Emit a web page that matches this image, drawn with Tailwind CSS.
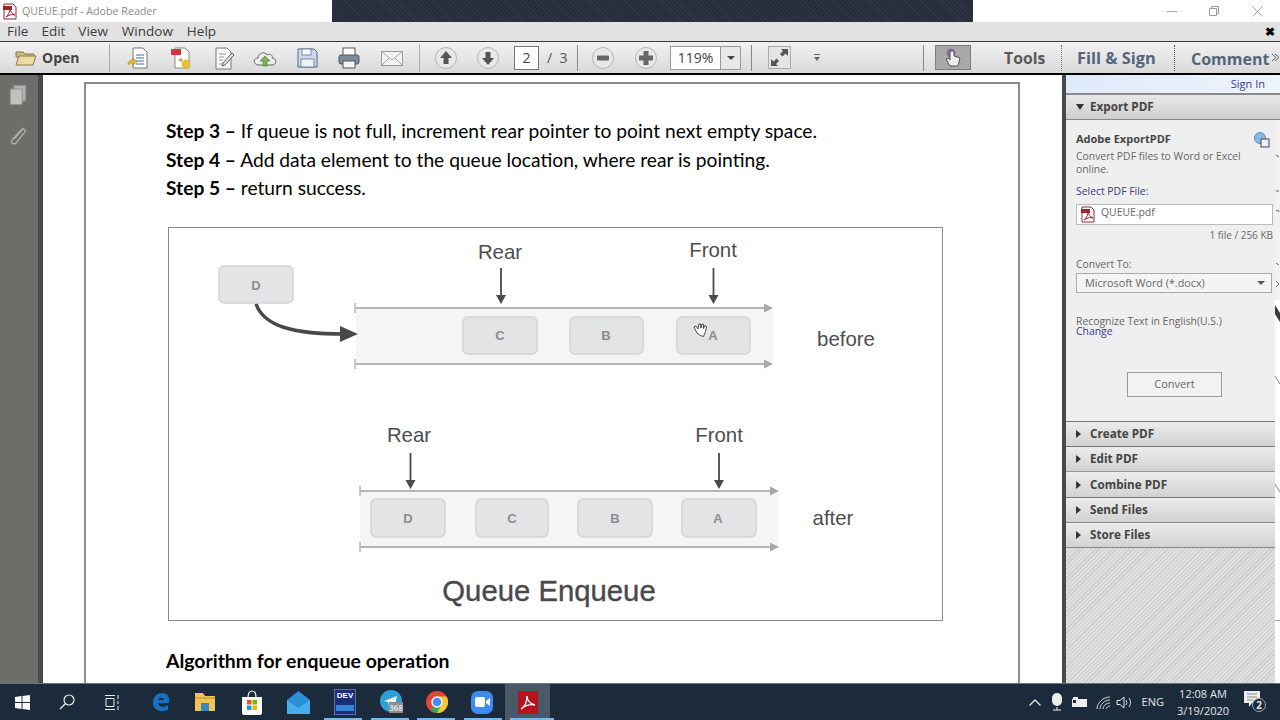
<!DOCTYPE html>
<html>
<head>
<meta charset="UTF-8">
<title>QUEUE.pdf - Adobe Reader</title>
<script src="https://cdn.jsdelivr.net/npm/@tailwindcss/browser@4"></script>
</head>
<body class="w-[1280px] h-[720px] overflow-hidden bg-white font-['Open_Sans',sans-serif] text-[#333]">
<div class="relative flex flex-col h-[720px]">

  <!-- dark banner over the title bar -->
  <div class="absolute left-[332px] top-0 w-[641px] h-[26px] bg-[repeating-linear-gradient(45deg,#262c3a_0,#262c3a_2px,#2f3645_2px,#2f3645_3px)]"></div>

  <!-- title bar -->
  <div class="h-[22px] flex items-center bg-white shrink-0">
    <svg class="ml-[2px] w-[16px] h-[17px]" viewBox="0 0 16 17"><path d="M2 1h9l3 3v12H2z" fill="#fff" stroke="#8a2b33"/><rect x="1" y="3" width="9" height="4" fill="#a3202c"/><path d="M4 14c3-2 4-6 4-9 0 3 2 6 5 7-3-1-6 0-9 2z" fill="none" stroke="#a3202c"/></svg>
    <span class="ml-[4px] text-[10.700px] text-[#8b8b8b]">QUEUE.pdf - Adobe Reader</span>
    <div class="ml-auto flex items-center text-[#a0a0a0]">
      <div class="w-[10px] h-px bg-[#aaa] mr-[32px]"></div>
      <svg class="w-[10px] h-[10px] mr-[33px]" viewBox="0 0 10 10" fill="none" stroke="#999"><path d="M.5 2.5h7v7h-7zM2.5 2.5v-2h7v7h-2"/></svg>
      <svg class="w-[11px] h-[11px] mr-[17px]" viewBox="0 0 11 11" stroke="#aaa"><path d="M.5.5l10 10M10.500.5l-10 10"/></svg>
    </div>
  </div>

  <!-- menu bar -->
  <div class="h-[19px] flex items-center bg-[#e2e2e2] shrink-0 text-[13.500px] text-[#3c3c3c] pl-[7px] relative">
    <span class="mr-[13px]">File</span><span class="mr-[13px]">Edit</span><span class="mr-[14px]">View</span><span class="mr-[14px]">Window</span><span>Help</span>
    <span class="ml-auto mr-[5px] text-[12px] font-bold text-black">✖</span>
  </div>

  <!-- toolbar -->
  <div class="h-[34px] flex items-center shrink-0 border-y border-[#3a3a3a] border-b-2 border-b-black bg-linear-to-b from-[#f2f2f2] to-[#d9d9d9]">
    <svg class="ml-[15px] w-[22px] h-[18px]" viewBox="0 0 22 18"><path d="M1 3h7l2 2h9v3H1z" fill="#c9b77f" stroke="#8c7a45"/><path d="M1 16l3-9h17l-3 9z" fill="#ecdca3" stroke="#8c7a45"/></svg>
    <span class="ml-[5px] w-[67px] text-[14px] font-bold text-[#444]">Open</span>
    <div class="w-px h-[28px] bg-[#aaa]"></div>
    <!-- file icons -->
    <svg class="ml-[16px] w-[24px] h-[24px]" viewBox="0 0 24 24"><path d="M7 2h10l4 4v16H7z" fill="#fff" stroke="#777"/><path d="M10 9h8M10 12h8M10 15h8M10 18h8" stroke="#3a6fb5" stroke-width="1.200"/><path d="M2 17c1-3 4-3 6-3l-1-2 4 4-4 3 1-2c-2 0-4 0-6 2z" fill="#e6b93a" stroke="#9a7a1c" stroke-width=".5"/></svg>
    <svg class="ml-[19px] w-[24px] h-[24px]" viewBox="0 0 24 24"><path d="M6 2h10l4 4v16H6z" fill="#fff" stroke="#888"/><rect x="2" y="3" width="10" height="6" fill="#d4343f"/><circle cx="17" cy="18" r="4.500" fill="#e6bf3c"/><path d="M9 14l4-2v4z" fill="#b89b3a"/></svg>
    <svg class="ml-[19px] w-[24px] h-[24px]" viewBox="0 0 24 24"><path d="M4 2h11l4 4v17H4z" fill="#f6f6f6" stroke="#777"/><path d="M7 8h7M7 11h5M7 14h4M7 18h5" stroke="#999"/><path d="M11 17l9-10 2 2-9 10-3 1z" fill="#ddd" stroke="#666"/></svg>
    <svg class="ml-[17px] w-[24px] h-[24px]" viewBox="0 0 24 24"><path d="M6 19c-6 0-6-7-1-7 0-5 7-7 9-3 4-2 6 1 5 3 5 0 5 7 0 7z" fill="#eee" stroke="#666"/><path d="M12 10l5 5h-3v5h-4v-5H7z" fill="#7fb35a" stroke="#4f7f33" stroke-width=".7"/></svg>
    <svg class="ml-[18px] w-[24px] h-[24px]" viewBox="0 0 24 24"><path d="M3 3h16l3 3v15H3z" fill="#cbdcf0" stroke="#56677d"/><rect x="7" y="3" width="9" height="6" fill="#f4f7fb" stroke="#56677d" stroke-width=".7"/><rect x="6" y="13" width="13" height="8" fill="#eef2f8" stroke="#56677d" stroke-width=".7"/></svg>
    <svg class="ml-[18px] w-[24px] h-[24px]" viewBox="0 0 24 24"><rect x="6" y="2" width="12" height="8" fill="#fff" stroke="#555"/><rect x="2" y="9" width="20" height="9" rx="2" fill="#7d8a9a" stroke="#4e5966"/><rect x="6" y="15" width="12" height="7" fill="#f3f3f3" stroke="#555"/></svg>
    <svg class="ml-[19px] w-[24px] h-[24px]" viewBox="0 0 24 24"><rect x="1.500" y="5.500" width="21" height="14" fill="#f3f3f3" stroke="#999"/><path d="M2 6l10 8 10-8M2 19l7-7M22 19l-7-7" fill="none" stroke="#aaa"/></svg>
    <div class="ml-[15px] w-px h-[28px] bg-[#aaa]"></div>
    <!-- page nav -->
    <svg class="ml-[15px] w-[22px] h-[22px]" viewBox="0 0 22 22"><circle cx="11" cy="11" r="10.500" fill="#e8e8e8" stroke="#b5b5b5"/><path d="M11 4l6 7h-3.500v6h-5v-6H5z" fill="#555"/></svg>
    <svg class="ml-[20px] w-[22px] h-[22px]" viewBox="0 0 22 22"><circle cx="11" cy="11" r="10.500" fill="#e8e8e8" stroke="#b5b5b5"/><path d="M11 18l6-7h-3.500V5h-5v6H5z" fill="#555"/></svg>
    <div class="ml-[15px] w-[25px] h-[24px] bg-white border border-[#777] flex items-center justify-center text-[14px] text-[#444]">2</div>
    <span class="ml-[8px] w-[30px] text-[14px] text-[#555] whitespace-nowrap">/&nbsp;&nbsp;3</span>
    <div class="w-px h-[26px] bg-[#888]"></div>
    <svg class="ml-[14px] w-[22px] h-[22px]" viewBox="0 0 22 22"><circle cx="11" cy="11" r="10.500" fill="#e8e8e8" stroke="#b5b5b5"/><rect x="5" y="8.500" width="12" height="5" rx="1" fill="#666"/></svg>
    <svg class="ml-[21px] w-[22px] h-[22px]" viewBox="0 0 22 22"><circle cx="11" cy="11" r="10.500" fill="#e8e8e8" stroke="#b5b5b5"/><path d="M8.500 4h5v4.500H18v5h-4.500V18h-5v-4.500H4v-5h4.500z" fill="#666"/></svg>
    <div class="ml-[13px] w-[71px] h-[24px] flex border border-[#999] bg-white">
      <div class="w-[50px] flex items-center justify-center text-[14px] text-[#444] border-r border-[#999]">119%</div>
      <div class="flex-1 flex items-center justify-center bg-[#e8e8e8]"><div class="border-x-[4px] border-x-transparent border-t-[4px] border-t-[#444]"></div></div>
    </div>
    <div class="ml-[10px] w-px h-[26px] bg-[#888]"></div>
    <div class="ml-[16px] w-[23px] h-[23px] border border-[#aaa] bg-[#e4e4e4] flex items-center justify-center">
      <svg class="w-[19px] h-[19px]" viewBox="0 0 19 19" fill="#555"><path d="M11 1h7v7l-2.500-2.500-3 3-2.500-2.500 3-3zM8 18H1v-7l2.500 2.500 3-3 2.500 2.500-3 3z"/></svg>
    </div>
    <div class="ml-[23px] flex flex-col items-center gap-[2px]"><div class="w-[6px] h-px bg-[#666]"></div><div class="border-x-[3px] border-x-transparent border-t-[4px] border-t-[#666]"></div></div>
    <div class="ml-[103px] w-px h-[26px] bg-[#888]"></div>
    <!-- hand tool -->
    <div class="ml-[11px] w-[36px] h-[25px] bg-[#a8a8a8] border border-[#7d7d7d] flex items-center justify-center">
      <svg class="w-[18px] h-[20px]" viewBox="0 0 18 20"><circle cx="7" cy="5" r="4.500" fill="#8572a8"/><path d="M6 3v9l-2-2-2 1 4 7h8l2-8-6-2V3z" fill="#eee" stroke="#555"/></svg>
    </div>
    <span class="ml-[33px] w-[41px] relative top-[1px] text-[15.800px] font-bold text-[#5a5a5a]">Tools</span>
    <div class="ml-[16px] h-[26px] border-l border-dotted border-[#777]"></div>
    <span class="ml-[15px] w-[82px] relative top-[1px] text-[16.400px] font-bold text-[#56657d] whitespace-nowrap">Fill &amp; Sign</span>
    <div class="ml-[15px] h-[26px] border-l border-dotted border-[#555]"></div>
    <span class="ml-[16px] w-[77px] relative top-[1px] text-[16px] font-bold text-[#56657d] whitespace-nowrap">Comment</span>
    <svg class="ml-[4px] w-[7px] h-[9px]" viewBox="0 0 7 9" fill="none" stroke="#666"><path d="M0 1l4 3.500L0 8M3 1l4 3.500L3 8"/></svg>
  </div>

  <!-- main -->
  <div class="flex-1 flex min-h-0">
    <!-- left rail -->
    <div class="w-[43px] shrink-0 flex">
      <div class="w-[38px] bg-[#6f6d6a] flex flex-col items-center pt-[9px] gap-[19px]">
        <svg class="w-[20px] h-[22px] ml-[-2px]" viewBox="0 0 20 24"><rect x="5.500" y="1.500" width="13" height="17" fill="#b3b1af" stroke="#918f8d"/><rect x="1.500" y="5.500" width="13" height="17" fill="#c2c0be" stroke="#918f8d"/></svg>
        <svg class="w-[20px] h-[22px] ml-[-2px]" viewBox="0 0 20 22" fill="none" stroke="#b0aeac" stroke-width="1.300"><path d="M15 3L4 15c-2 3 2 5 4 3l9-11c1-2-1-4-3-2L6 14"/></svg>
      </div>
      <div class="w-[5px] bg-[#4b4a48]"></div>
    </div>

    <!-- document area -->
    <div class="flex-1 bg-white pl-[42px] pt-[7px] overflow-hidden">
      <div class="ml-[-1px] w-[936px] h-[620px] border-x-2 border-t-2 border-x-[#8e8e8e] border-t-[#8e8e8e] font-['Lato',sans-serif] text-black">
        <div class="pl-[80px] pt-[33px] text-[19.200px] leading-[28.500px] h-[143px]">
          <p><b>Step 3 –</b> If queue is not full, increment rear pointer to point next empty space.</p>
          <p><b>Step 4 –</b> Add data element to the queue location, where rear is pointing.</p>
          <p><b>Step 5 –</b> return success.</p>
        </div>
        <!-- diagram -->
        <div class="ml-[82px] w-[775px] h-[394px] border border-[#8a8a8a]">
          <svg width="773" height="392" viewBox="169 228 773 392" font-family="Liberation Sans, sans-serif" fill="#4e4e50">
            <rect x="356" y="309" width="417" height="55" fill="#f5f5f5"/>
            <rect x="360" y="492" width="418" height="55" fill="#f5f5f5"/>
            <g fill="#e3e4e6" stroke="#d3d4d5" stroke-width="1.500">
              <rect x="219" y="266" width="74" height="37" rx="5"/>
              <rect x="463" y="317" width="74" height="37" rx="5"/>
              <rect x="570" y="317" width="73" height="37" rx="5"/>
              <rect x="677" y="317" width="73" height="37" rx="5"/>
              <rect x="371" y="499" width="74" height="38" rx="5"/>
              <rect x="476" y="499" width="72" height="38" rx="5"/>
              <rect x="578" y="499" width="74" height="38" rx="5"/>
              <rect x="682" y="499" width="74" height="38" rx="5"/>
            </g>
            <g stroke="#b5b5b5" stroke-width="2" fill="#a8a8a8">
              <path d="M356 308H764M356 364H764M360 491H770M360 547H770"/>
              <path d="M764 303.500l9 4.500-9 4.500zM764 359.500l9 4.500-9 4.500zM770 486.500l9 4.500-9 4.500zM770 542.500l9 4.500-9 4.500z" stroke="none"/>
              <path d="M355 303v10M355 359v10M360 486v10M360 542v10" stroke-width="1.500"/>
            </g>
            <g stroke="#4a4a4c" stroke-width="1.800" fill="#4a4a4c">
              <path d="M501 268V297M713.500 268V297M410.500 453V481M719 453V481"/>
              <path d="M496 295h10l-5 9zM708.500 295h10l-5 9zM405.500 480h10l-5 9zM714 480h10l-5 9z" stroke="none"/>
            </g>
            <path d="M256 304c8 22 36 30 88 30" fill="none" stroke="#48484b" stroke-width="3.500"/>
            <path d="M340 326l18 8-18 8z" fill="#48484b"/>
            <g font-size="13" font-weight="700" text-anchor="middle" fill="#8c8d91">
              <text x="256" y="290">D</text><text x="500" y="340">C</text><text x="606" y="340">B</text><text x="713" y="340">A</text>
              <text x="408" y="523">D</text><text x="512" y="523">C</text><text x="615" y="523">B</text><text x="718" y="523">A</text>
            </g>
            <g font-size="20.400" text-anchor="middle">
              <text x="500" y="259">Rear</text><text x="713" y="257">Front</text>
              <text x="409" y="442">Rear</text><text x="719" y="442">Front</text>
              <text x="846" y="346">before</text><text x="833" y="525">after</text>
            </g>
            <text x="549" y="601" font-size="29.300" text-anchor="middle" fill="#4a4a4c" stroke="#4a4a4c" stroke-width=".4">Queue Enqueue</text>
            <!-- mouse pointer -->
            <path d="M697 333l-3-6 2-1 2 3 1-5 1.500 0 .5 4 1-4 1.500.5 0 4 1.500-3 1.500 1-1 5-2 5-3-1z" fill="#fff" stroke="#222" stroke-width=".8"/>
          </svg>
        </div>
        <p class="pl-[80px] mt-[25px] text-[19.400px] font-bold">Algorithm for enqueue operation</p>
      </div>
    </div>

    <!-- divider and right panel -->
    <div class="w-[4px] bg-[#4a4a4a] shrink-0"></div>
    <div class="w-[214px] shrink-0 flex flex-col text-[#666] bg-white">
      <div class="h-[20px] bg-linear-to-r from-[#dfeafa] to-[#eef4fb] border-b-2 border-[#8a8a8a] text-right pr-[15px] text-[11px] leading-[18px] text-[#3a3a9a] shrink-0">Sign In</div>
      <div class="h-[25px] bg-linear-to-b from-[#e8e8e8] to-[#cfcfcf] border-b border-[#888] flex items-center pl-[10px] text-[11.700px] font-bold text-[#444] shrink-0">
        <span class="border-x-[4px] border-x-transparent border-t-[6px] border-t-[#333] mr-[6px]"></span>Export PDF
      </div>
      <div class="flex-1 flex min-h-0">
        <div class="w-[209px] flex flex-col">
          <div class="h-[301px] bg-[#efefef] pl-[10px] pt-[12px] text-[10.400px] relative shrink-0">
            <div class="font-bold text-[#444] text-[11px] leading-[14px]">Adobe ExportPDF</div>
            <svg class="absolute left-[188px] top-[12px] w-[16px] h-[16px]" viewBox="0 0 16 16"><circle cx="6" cy="6" r="5.500" fill="#8db8e0" stroke="#5f8fbd"/><rect x="7" y="7" width="8" height="8" fill="#eef" stroke="#445"/></svg>
            <div class="mt-[4px] leading-[12.500px] w-[170px]">Convert PDF files to Word or Excel online.</div>
            <div class="mt-[9px] text-[#3a3a8a] leading-[14px]">Select PDF File:</div>
            <div class="mt-[6px] w-[197px] h-[21px] bg-white border border-[#bbb] flex items-center pl-[3px]">
              <svg class="w-[16px] h-[17px]" viewBox="0 0 16 17"><path d="M2 1h9l3 3v12H2z" fill="#fff" stroke="#8a2b33"/><rect x="1" y="3" width="9" height="4" fill="#a3202c"/><path d="M4 14c3-2 4-6 4-9 0 3 2 6 5 7-3-1-6 0-9 2z" fill="none" stroke="#a3202c"/></svg>
              <span class="ml-[5px] relative top-[-2px]">QUEUE.pdf</span>
            </div>
            <div class="w-[197px] text-right mt-[3px] text-[10px] leading-[14px]">1 file / 256 KB</div>
            <div class="mt-[15px] leading-[14px]">Convert To:</div>
            <div class="mt-[2px] w-[196px] h-[20px] bg-[#f4f4f4] border border-[#aaa] flex items-center pl-[8px] justify-between pr-[6px] text-[10.800px]">
              <span>Microsoft Word (*.docx)</span><span class="border-x-[4px] border-x-transparent border-t-[4px] border-t-[#555]"></span>
            </div>
            <div class="mt-[23px] leading-[10px]">Recognize Text in English(U.S.)<br><span class="text-[#3a3a8a]">Change</span></div>
            <div class="mt-[36px] ml-[51px] w-[95px] h-[25px] bg-[#f2f2f2] border border-[#999] flex items-center justify-center text-[11px]">Convert</div>
          </div>
          <div class="flex flex-col text-[11.700px] font-bold text-[#444] shrink-0">
            <div class="h-[25px] bg-linear-to-b from-[#ececec] to-[#d2d2d2] border-t border-[#777] flex items-center pl-[10px]"><span class="border-y-[4px] border-y-transparent border-l-[5px] border-l-[#333] mr-[9px]"></span>Create PDF</div>
            <div class="h-[25px] bg-linear-to-b from-[#ececec] to-[#d2d2d2] border-t border-[#777] flex items-center pl-[10px]"><span class="border-y-[4px] border-y-transparent border-l-[5px] border-l-[#333] mr-[9px]"></span>Edit PDF</div>
            <div class="h-[26px] bg-linear-to-b from-[#ececec] to-[#d2d2d2] border-t border-[#999] flex items-center pl-[10px]"><span class="border-y-[4px] border-y-transparent border-l-[5px] border-l-[#333] mr-[9px]"></span>Combine PDF</div>
            <div class="h-[25px] bg-linear-to-b from-[#ececec] to-[#d2d2d2] border-t border-[#777] flex items-center pl-[10px]"><span class="border-y-[4px] border-y-transparent border-l-[5px] border-l-[#333] mr-[9px]"></span>Send Files</div>
            <div class="h-[26px] bg-linear-to-b from-[#ececec] to-[#d2d2d2] border-y border-y-[#888] flex items-center pl-[10px]"><span class="border-y-[4px] border-y-transparent border-l-[5px] border-l-[#333] mr-[9px]"></span>Store Files</div>
          </div>
          <div class="flex-1 bg-[repeating-linear-gradient(135deg,#cdcdcd_0,#cdcdcd_1px,#dfdfdf_1px,#dfdfdf_3px)]"></div>
        </div>
        <!-- sliver of the window behind, right of the panel -->
        <svg class="w-[5px] h-[563px]" viewBox="0 120 5 563" fill="none" stroke="#666">
          <rect x="0" y="120" width="5" height="180" fill="#f2f2f2" stroke="none"/>
          <path d="M1 155l3 2M1 191h3M1 211c1-1 3-1 3 1M1 263l3 2M1 281l3 3-3 3"/>
          <path d="M0 305l5 8v9l-5-8z" fill="#3a3a3a" stroke="none"/>
          <path d="M0 376l5 8M0 484l5 8" stroke-width=".8"/>
          <path d="M0 620.500h5" stroke="#aaa"/>
        </svg>
      </div>
    </div>
  </div>

  <!-- taskbar -->
  <div class="h-[37px] shrink-0 bg-[#1c2b3b] border-t border-[#6a7480] flex items-center relative text-white">
    <svg class="ml-[15px] w-[15px] h-[15px]" viewBox="0 0 15 15" fill="#fff"><path d="M0 2l6.500-1v6H0zM7.500 1L15 0v7H7.500zM0 8h6.500v6L0 13zM7.500 8H15v7l-7.500-1z"/></svg>
    <svg class="ml-[29px] w-[16px] h-[16px]" viewBox="0 0 16 16" fill="none" stroke="#eee" stroke-width="1.200"><circle cx="10" cy="6" r="5"/><path d="M6.500 9.500L1 15"/></svg>
    <svg class="ml-[30px] w-[15px] h-[15px]" viewBox="0 0 15 15" fill="none" stroke="#eee"><path d="M0 .5h10M0 14.500h10M1 3.500h8v8H1zM13 0v4M13 6v3M13 11v4"/></svg>
    <svg class="ml-[32px] w-[18px] h-[20px]" viewBox="0 0 18 20"><path d="M1 11C1 4 6 1 10 1c5 0 8 4 7 10H6c0 4 6 5 10 2v5c-7 3-15 0-15-7zm5-3h6c0-3-6-3-6 0z" fill="#1272c6"/></svg>
    <svg class="ml-[25px] w-[20px] h-[20px]" viewBox="0 0 20 20"><path d="M0 1h8l2 3h10v15H0z" fill="#f2c553"/><rect x="6" y="11" width="8" height="8" fill="#3a87c8"/><rect x="0" y="5" width="20" height="2" fill="#d9a93a"/></svg>
    <svg class="ml-[26px] w-[22px] h-[25px]" viewBox="0 0 22 25"><path d="M1 7h20v16a2 2 0 0 1-2 2H3a2 2 0 0 1-2-2z" fill="#fff"/><path d="M7 7c0-8 8-8 8 0" fill="none" stroke="#fff" stroke-width="1.200"/><rect x="6" y="10" width="4.500" height="4.500" fill="#e8502a"/><rect x="11.500" y="10" width="4.500" height="4.500" fill="#7ab800"/><rect x="6" y="15.500" width="4.500" height="4.500" fill="#1f9be0"/><rect x="11.500" y="15.500" width="4.500" height="4.500" fill="#f5b800"/></svg>
    <svg class="ml-[24px] w-[23px] h-[23px]" viewBox="0 0 23 23"><path d="M0 9L11.500 0 23 9v14H0z" fill="#2a8fd6"/><path d="M0 9l11.500 8L23 9v14H0z" fill="#46aee8"/></svg>
    <div class="ml-[24px] w-[22px] h-[26px] bg-[#1a2f7c] flex flex-col items-center border border-[#5b6ea8]"><span class="text-[8px] font-bold leading-[12px] font-['Liberation_Sans',sans-serif]">DEV</span><div class="w-[18px] h-[6px] mt-[3px] bg-[#3183d6]"></div></div>
    <div class="ml-[24px] relative w-[24px] h-[24px]">
      <svg class="w-[22px] h-[22px]" viewBox="0 0 22 22"><circle cx="11" cy="11" r="11" fill="#2f9fd6"/><path d="M4 11l13-5-2 11-4-3-2 2-1-4z" fill="#e9f4fb"/></svg>
      <div class="absolute left-[9px] top-[12px] w-[14px] h-[11px] bg-[#8a8f94] text-[8px] leading-[11px] text-center font-bold text-[#dedede]">368</div>
    </div>
    <svg class="ml-[22px] w-[22px] h-[24px]" viewBox="0 0 24 24"><circle cx="12" cy="12" r="12" fill="#e0463a"/><path d="M12 12L22.400 18A12 12 0 0 1 5 21.800z" fill="#35a853"/><path d="M12 6H22.400A12 12 0 0 1 12 24l5-9z" fill="#f7c52c"/><circle cx="12" cy="12" r="5.500" fill="#4a8af4" stroke="#fff" stroke-width="1.500"/></svg>
    <div class="ml-[23px] w-[22px] h-[23px] rounded-[7px] bg-[#3d8cf5] flex items-center justify-center"><svg class="w-[15px] h-[10px]" viewBox="0 0 15 10" fill="#fff"><rect width="10" height="10" rx="2"/><path d="M11 4l4-3v8l-4-3z"/></svg></div>
    <!-- active reader button -->
    <div class="ml-[12px] w-[45px] h-[36px] bg-[#4a5967] flex items-center justify-center">
      <svg class="w-[20px] h-[23px]" viewBox="0 0 20 23"><rect width="20" height="23" fill="#b9141d"/><path d="M3 18c5-3 6-8 6-13 0 4 3 8 8 9-5-1-9 0-14 4z" fill="none" stroke="#fff" stroke-width="1.300"/></svg>
    </div>
    <!-- underlines of the running apps -->
    <div class="absolute left-[324px] bottom-0 flex gap-[8.500px]">
      <div class="w-[38px] h-[2px] bg-[#76b9ed]"></div><div class="w-[38px] h-[2px] bg-[#76b9ed]"></div><div class="w-[38px] h-[2px] bg-[#76b9ed]"></div><div class="w-[38px] h-[2px] bg-[#76b9ed]"></div><div class="w-[44px] h-[2px] bg-[#76b9ed]"></div>
    </div>
    <!-- tray -->
    <div class="ml-auto flex items-center text-[#e6e6e6]">
      <svg class="w-[12px] h-[7px]" viewBox="0 0 12 7" fill="none" stroke="#e6e6e6" stroke-width="1.300"><path d="M.5 6.500L6 1l5.500 5.500"/></svg>
      <svg class="ml-[10px] w-[12px] h-[18px]" viewBox="0 0 12 18"><rect x="1" y="0" width="10" height="13" rx="5" fill="#eee"/><path d="M6 14v3M2 17h8" stroke="#eee"/></svg>
      <svg class="ml-[9px] w-[16px] h-[10px]" viewBox="0 0 16 10"><rect x="0" y="2" width="15" height="8" fill="#eee"/><rect x="1" y="0" width="5" height="3" fill="#eee"/><rect x="1" y="3" width="3" height="3" fill="#1c2b3b"/></svg>
      <svg class="ml-[8px] w-[14px] h-[13px]" viewBox="0 0 14 13" fill="none" stroke="#d5d5d5"><path d="M1 13C1 7 7 1 14 1M4 13c0-4 4-9 10-9M7 13c0-3 3-6 7-6M10 13c0-1 2-3 4-3"/></svg>
      <svg class="ml-[6px] w-[16px] h-[13px]" viewBox="0 0 16 13" fill="none" stroke="#e6e6e6"><path d="M1 4.500h3L8 1v11L4 8.500H1zM10 4c1 1.500 1 3.500 0 5M13 2c2 3 2 6 0 9"/></svg>
      <span class="ml-[10px] text-[11px]">ENG</span>
      <div class="ml-[14px] w-[50px] flex flex-col items-center text-[11px] leading-[17px]"><span>12:08 AM</span><span>3/19/2020</span></div>
      <div class="ml-[16px] mr-[14px] relative w-[22px] h-[22px]">
        <svg class="w-[18px] h-[17px]" viewBox="0 0 18 17"><path d="M0 0h16v12H8l-3 4v-4H0z" fill="#eee"/><path d="M3 3h10M3 6h10M3 9h6" stroke="#888"/></svg>
        <div class="absolute left-[8px] top-[7px] w-[14px] h-[14px] rounded-full bg-[#1c2b3b] border border-[#aaa] text-[10px] font-bold leading-[12px] text-center">2</div>
      </div>
    </div>
  </div>
</div>
</body>
</html>
